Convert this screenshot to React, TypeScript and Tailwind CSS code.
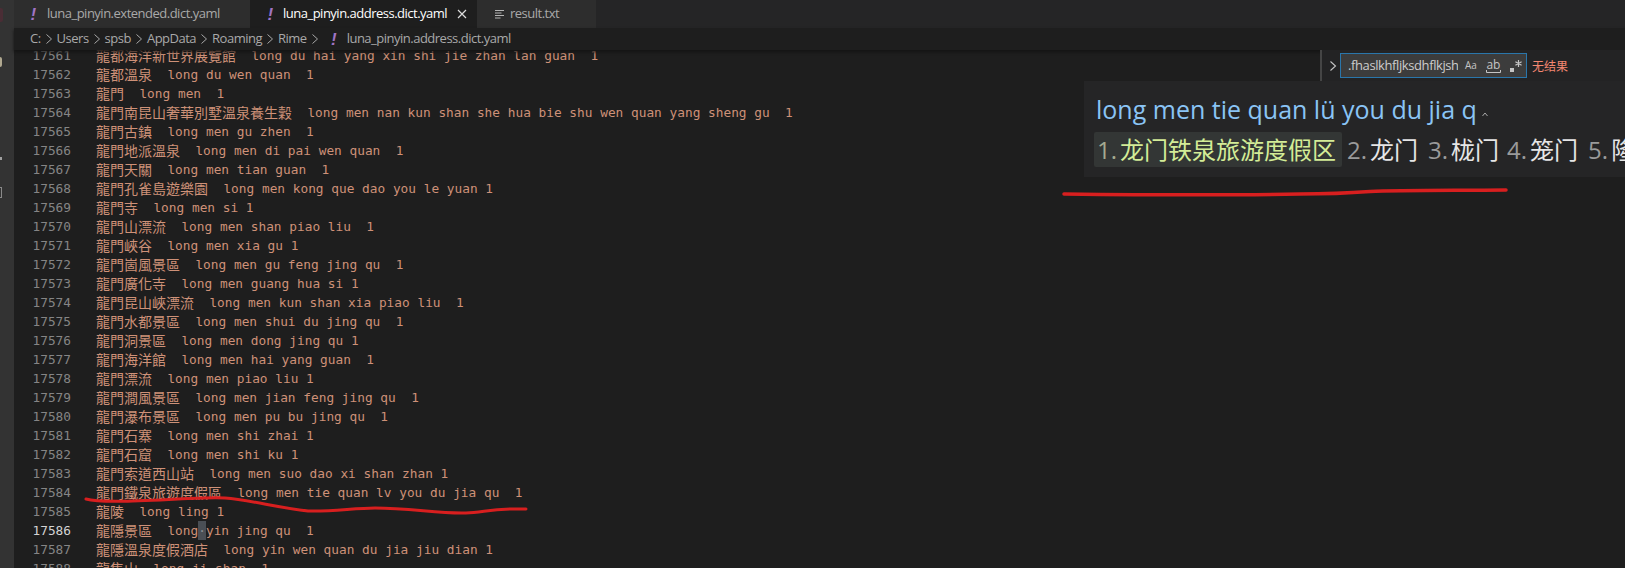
import React from "react";

const lines: [string, string][] = [
  ["龍都海洋新世界展覽館", "long du hai yang xin shi jie zhan lan guan  1"],
  ["龍都溫泉", "long du wen quan  1"],
  ["龍門", "long men  1"],
  ["龍門南昆山奢華別墅溫泉養生穀", "long men nan kun shan she hua bie shu wen quan yang sheng gu  1"],
  ["龍門古鎮", "long men gu zhen  1"],
  ["龍門地派溫泉", "long men di pai wen quan  1"],
  ["龍門天關", "long men tian guan  1"],
  ["龍門孔雀島遊樂園", "long men kong que dao you le yuan 1"],
  ["龍門寺", "long men si 1"],
  ["龍門山漂流", "long men shan piao liu  1"],
  ["龍門峽谷", "long men xia gu 1"],
  ["龍門崮風景區", "long men gu feng jing qu  1"],
  ["龍門廣化寺", "long men guang hua si 1"],
  ["龍門昆山峽漂流", "long men kun shan xia piao liu  1"],
  ["龍門水都景區", "long men shui du jing qu  1"],
  ["龍門洞景區", "long men dong jing qu 1"],
  ["龍門海洋館", "long men hai yang guan  1"],
  ["龍門漂流", "long men piao liu 1"],
  ["龍門澗風景區", "long men jian feng jing qu  1"],
  ["龍門瀑布景區", "long men pu bu jing qu  1"],
  ["龍門石寨", "long men shi zhai 1"],
  ["龍門石窟", "long men shi ku 1"],
  ["龍門索道西山站", "long men suo dao xi shan zhan 1"],
  ["龍門鐵泉旅遊度假區", "long men tie quan lv you du jia qu  1"],
  ["龍陵", "long ling 1"],
  ["龍隱景區", "long yin jing qu  1"],
  ["龍隱溫泉度假酒店", "long yin wen quan du jia jiu dian 1"],
  ["龍隼山", "long ji shan  1"],
];

const ui = "font-['Open_Sans','Noto_Sans_CJK_SC',sans-serif]";

function Bang() {
  return (
    <span className="w-[8px] shrink-0 text-center text-[#a074c4] font-bold italic text-[17px] leading-none font-['Liberation_Sans',sans-serif]">
      !
    </span>
  );
}

function Chevron() {
  return (
    <svg width="8" height="12" viewBox="0 0 8 12" className="mx-[4px] shrink-0">
      <path d="M1.5 1.5 L6.5 6 L1.5 10.5" fill="none" stroke="#a8a8a8" strokeWidth="1" />
    </svg>
  );
}

function Candidate({ n, text, gap }: { n: string; text: string; gap: string }) {
  return (
    <div className={`flex items-center shrink-0 ${gap}`}>
      <span className="text-[#9a9a9a]">{n}</span>
      <span className="ml-[3px] text-[#e6e6e6]">{text}</span>
    </div>
  );
}

export default function App() {
  return (
    <div className={`w-[1625px] h-[568px] overflow-hidden relative bg-[#1e1e1e] flex ${ui}`}>
      <div className="w-[14px] shrink-0 bg-[#333333] flex flex-col relative">
        <div className="absolute left-0 top-[8px] w-[3px] h-[14px] bg-[#4a2d35] rounded-r-[2px]" />
        <div className="absolute left-0 top-[57px] w-[2px] h-[10px] bg-[#b0a890] rounded-r-[3px]" />
        <div className="absolute left-0 top-[157px] w-[2px] h-[3px] bg-[#a0a0a0]" />
        <div className="absolute left-0 top-[187px] w-[2px] h-[11px] border-y border-r border-[#8a8a8a]" />
      </div>
      <div className="flex-1 flex flex-col min-w-0">
        <div className="h-[28px] shrink-0 bg-[#252526] flex text-[13px] tracking-[-0.5px] relative z-10">
          <div className="w-[236px] bg-[#2d2d2d] flex items-center gap-[10px] pl-[15px] text-[#a9a9a9]">
            <Bang />
            <span>luna_pinyin.extended.dict.yaml</span>
          </div>
          <div className="w-[227px] bg-[#1e1e1e] flex items-center gap-[9px] pl-[16px] text-white">
            <Bang />
            <span>luna_pinyin.address.dict.yaml</span>
            <svg width="10" height="10" viewBox="0 0 10 10" className="ml-[1px] shrink-0">
              <path d="M1 1L9 9M9 1L1 9" stroke="#dcdcdc" strokeWidth="1.2" fill="none" />
            </svg>
          </div>
          <div className="w-[119px] bg-[#2d2d2d] flex items-center gap-[6px] pl-[18px] text-[#a9a9a9]">
            <svg width="9" height="10" viewBox="0 0 9 10" className="shrink-0">
              <path d="M0 1.5H9M0 4H6.5M0 6.5H9M0 9H5.5" stroke="#b4b4b4" strokeWidth="1" fill="none" />
            </svg>
            <span>result.txt</span>
          </div>
        </div>
        <div className="h-[22px] shrink-0 flex items-center pl-[16px] text-[13px] text-[#a9a9a9] tracking-[-0.5px] shadow-[0_2px_3px_#141414] relative z-10 bg-[#1e1e1e]">
          <span>C:</span><Chevron />
          <span>Users</span><Chevron />
          <span>spsb</span><Chevron />
          <span>AppData</span><Chevron />
          <span>Roaming</span><Chevron />
          <span>Rime</span><Chevron />
          <span className="ml-[7px] mr-[9px] flex"><Bang /></span>
          <span>luna_pinyin.address.dict.yaml</span>
        </div>
        <div className="flex-1 overflow-hidden -mt-[4px]">
          {lines.map(([han, py], i) => (
            <div key={i} className="h-[19px] flex items-center whitespace-pre text-[#ce9178]">
              <span className={`w-[57px] shrink-0 text-right font-['DejaVu_Sans_Mono',monospace] text-[12.8px] ${i === 25 ? "text-[#d4d4d4]" : "text-[#858585]"}`}>
                {17561 + i}
              </span>
              <span className="ml-[25px] text-[14px] font-['Noto_Sans_CJK_TC',sans-serif]">{han}</span>
              {i === 25 ? (
                <span className="flex items-center font-['DejaVu_Sans_Mono',monospace] text-[12.8px]">
                  {"  long"}
                  <span className="h-[19px] flex items-center bg-[#4a4f55] text-[#8b8f94]">·</span>
                  {"yin jing qu  1"}
                </span>
              ) : (
                <span className="font-['DejaVu_Sans_Mono',monospace] text-[12.8px]">{"  " + py}</span>
              )}
            </div>
          ))}
        </div>
      </div>

      <div className="absolute z-20 left-[1320px] top-[50px] w-[305px] h-[31px] bg-[#232324] border-l-[2px] border-[#454545] flex items-center pl-[7px] text-[13px]">
        <svg width="8" height="12" viewBox="0 0 8 12" className="mr-[3px] shrink-0">
          <path d="M1.5 1.5 L6.5 6 L1.5 10.5" fill="none" stroke="#c5c5c5" strokeWidth="1.1" />
        </svg>
        <div className="w-[187px] h-[25px] bg-[#3c3c3c] border border-[#2a76ab] flex items-center text-[#cccccc] pl-[7px] tracking-[-0.4px] whitespace-nowrap">
          <span className="w-[110px] shrink-0 overflow-hidden">.fhaslkhfljksdhflkjshd</span>
          <span className="ml-[7px] text-[10px] text-[#c5c5c5] tracking-normal">Aa</span>
          <span className="ml-[9px] flex flex-col items-center text-[12px] leading-[11px] text-[#c5c5c5] tracking-normal">
            ab
            <svg width="15" height="3" viewBox="0 0 15 3" className="shrink-0">
              <path d="M0.5 0V2.5H14.5V0" stroke="#c5c5c5" strokeWidth="1" fill="none" />
            </svg>
          </span>
          <svg width="14" height="14" viewBox="0 0 14 14" className="ml-[8px] shrink-0">
            <rect x="1" y="9" width="4" height="4" fill="#c5c5c5" />
            <path d="M9.5 1V8M6.4 2.8L12.6 6.2M12.6 2.8L6.4 6.2" stroke="#c5c5c5" strokeWidth="1.2" fill="none" />
          </svg>
        </div>
        <span className="ml-[5px] text-[12px] text-[#f48771] font-['Noto_Sans_CJK_SC',sans-serif]">无结果</span>
      </div>

      <div className="absolute z-20 left-[1084px] top-[81px] w-[541px] h-[96px] bg-[#252526] pl-[10px] pt-[9px] whitespace-nowrap overflow-hidden font-['Open_Sans','Noto_Sans_CJK_SC',sans-serif]">
        <div className="h-[40px] flex items-center pl-[2px] text-[25px] text-[#8ac4f5]">
          long men tie quan lü you du jia q
          <svg width="6" height="5" viewBox="0 0 6 5" className="ml-[5px] mt-[9px] shrink-0">
            <path d="M0.5 4L3 1L5.5 4" stroke="#a8a8a8" strokeWidth="1" fill="none" />
          </svg>
        </div>
        <div className="flex items-center h-[37px] mt-[1px] text-[24px]">
          <div className="bg-[#333635] rounded-[2px] h-[35px] w-[248px] shrink-0 flex items-center pl-[3px] text-[#d3ec97]">
            <span className="text-[#a4aa90]">1.</span>
            <span className="ml-[3px]">龙门铁泉旅游度假区</span>
          </div>
          <Candidate n="2." text="龙门" gap="ml-[5px]" />
          <Candidate n="3." text="栊门" gap="ml-[10px]" />
          <Candidate n="4." text="笼门" gap="ml-[8px]" />
          <Candidate n="5." text="隆门" gap="ml-[10px]" />
        </div>
      </div>

      <svg className="absolute z-30 left-0 top-0 pointer-events-none" width="1625" height="568">
        <path d="M1064 194 C1150 195 1250 195 1300 194 C1330 194 1350 193 1370 191.5 C1400 190 1450 190.5 1506 190" stroke="#d81f1f" strokeWidth="3.5" fill="none" strokeLinecap="round" />
        <path d="M86 499 C100 503 140 501 178 499 C200 498 215 497 225 498 C250 500 275 507 308 511 C330 512 355 508 375 508 C410 508 440 514 466 513 C485 512 495 508 526 509" stroke="#d81f1f" strokeWidth="3" fill="none" strokeLinecap="round" />
      </svg>
    </div>
  );
}
